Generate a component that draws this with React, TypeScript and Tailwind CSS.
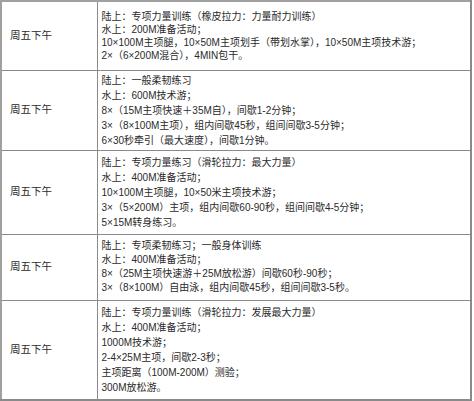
const rows: string[][] = [
  [
    "陆上：专项力量训练（橡皮拉力：力量耐力训练）",
    "水上：200M准备活动；",
    "10×100M主项腿，10×50M主项划手（带划水掌），10×50M主项技术游；",
    "2×（6×200M混合），4MIN包干。",
  ],
  [
    "陆上：一般柔韧练习",
    "水上：600M技术游；",
    "8×（15M主项快速＋35M自），间歇1-2分钟；",
    "3×（8×100M主项），组内间歇45秒，组间间歇3-5分钟；",
    "6×30秒牵引（最大速度），间歇1分钟。",
  ],
  [
    "陆上：专项力量练习（滑轮拉力：最大力量）",
    "水上：400M准备活动；",
    "10×100M主项腿，10×50米主项技术游；",
    "3×（5×200M）主项，组内间歇60-90秒，组间间歇4-5分钟；",
    "5×15M转身练习。",
  ],
  [
    "陆上：专项柔韧练习；一般身体训练",
    "水上：400M准备活动；",
    "8×（25M主项快速游＋25M放松游）间歇60秒-90秒；",
    "3×（8×100M）自由泳，组内间歇45秒，组间间歇3-5秒。",
  ],
  [
    "陆上：专项力量训练（滑轮拉力：发展最大力量）",
    "水上：400M准备活动；",
    "1000M技术游；",
    "2-4×25M主项，间歇2-3秒；",
    "主项距离（100M-200M）测验；",
    "300M放松游。",
  ],
];

// row heights and line spacing read off the screenshot
const heights = ["h-[69px]", "h-[80px]", "h-[84px]", "h-[66px]", "h-[100px]"];
const leads = ["leading-[13px]", "leading-[15px]", "leading-[15px]", "leading-[14px]", "leading-[15px]"];

export default function App() {
  return (
    <div className="w-[474px] h-[401px] bg-white text-[#2a2a2a] font-['Liberation_Sans','Noto_Sans_CJK_SC',sans-serif] text-[10px]">
      <table className="w-[472px] border-collapse border-2 border-[#8a8a8a] border-t-[#a0a0a0] border-l-[#a0a0a0]">
        <tbody>
          {rows.map((lines, i) => (
            <tr key={i} className={heights[i]}>
              <td className="w-[96px] border border-[#8a8a8a] pl-2 align-middle text-[10.5px]">周五下午</td>
              <td className={`border border-[#8a8a8a] pl-1 align-middle whitespace-nowrap ${leads[i]}`}>
                {lines.map((l, j) => (
                  <div key={j}>{l}</div>
                ))}
              </td>
            </tr>
          ))}
        </tbody>
      </table>
    </div>
  );
}
